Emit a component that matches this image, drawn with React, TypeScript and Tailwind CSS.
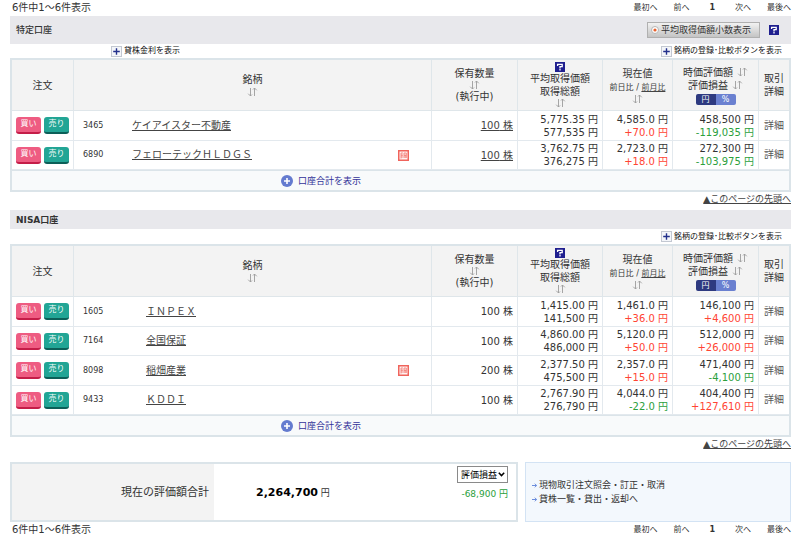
import type { ReactNode } from "react";

type Money = { text: string; tone?: "up" | "down" };

type Holding = {
  code: string;
  name: string;
  qty: string;
  alert?: boolean;
  avg: string;
  cost: string;
  price: string;
  change: Money;
  value: string;
  profit: Money;
};

const tokutei: Holding[] = [
  {
    code: "3465",
    name: "ケイアイスター不動産",
    qty: "100",
    avg: "5,775.35",
    cost: "577,535",
    price: "4,585.0",
    change: { text: "+70.0", tone: "up" },
    value: "458,500",
    profit: { text: "-119,035", tone: "down" },
  },
  {
    code: "6890",
    name: "フェローテックＨＬＤＧＳ",
    qty: "100",
    alert: true,
    avg: "3,762.75",
    cost: "376,275",
    price: "2,723.0",
    change: { text: "+18.0", tone: "up" },
    value: "272,300",
    profit: { text: "-103,975", tone: "down" },
  },
];

const nisa: Holding[] = [
  {
    code: "1605",
    name: "ＩＮＰＥＸ",
    qty: "100",
    avg: "1,415.00",
    cost: "141,500",
    price: "1,461.0",
    change: { text: "+36.0", tone: "up" },
    value: "146,100",
    profit: { text: "+4,600", tone: "up" },
  },
  {
    code: "7164",
    name: "全国保証",
    qty: "100",
    avg: "4,860.00",
    cost: "486,000",
    price: "5,120.0",
    change: { text: "+50.0", tone: "up" },
    value: "512,000",
    profit: { text: "+26,000", tone: "up" },
  },
  {
    code: "8098",
    name: "稲畑産業",
    qty: "200",
    alert: true,
    avg: "2,377.50",
    cost: "475,500",
    price: "2,357.0",
    change: { text: "+15.0", tone: "up" },
    value: "471,400",
    profit: { text: "-4,100", tone: "down" },
  },
  {
    code: "9433",
    name: "ＫＤＤＩ",
    qty: "100",
    avg: "2,767.90",
    cost: "276,790",
    price: "4,044.0",
    change: { text: "-22.0", tone: "down" },
    value: "404,400",
    profit: { text: "+127,610", tone: "up" },
  },
];

const toneClass = {
  up: "text-[#ff4433]",
  down: "text-[#2ba03c]",
};

function SortArrows() {
  return (
    <button type="button" aria-label="並べ替え" className="inline-flex">
      <svg width="11" height="10" viewBox="0 0 11 10" fill="none" stroke="#9c9c9c" strokeWidth="0.9">
        <path d="M3.5 1V9M1.2 6.7L3.5 9L5 7.5" />
        <path d="M7.5 9V1M6 2.5L7.5 1L9.8 3.3" />
      </svg>
    </button>
  );
}

function HelpIcon() {
  return (
    <button type="button" aria-label="ヘルプ" className="block">
      <svg width="10" height="10" viewBox="0 0 10 10">
        <rect width="10" height="10" fill="#1f1f8f" />
        <path
          d="M2.6 3.9V2.3H7.2V4.6H5V6.4M5 7.1V8.6"
          fill="none"
          stroke="#fff"
          strokeWidth="1.3"
        />
      </svg>
    </button>
  );
}

function PlusLink({ children }: { children: ReactNode }) {
  return (
    <a href="#" className="flex items-center gap-[2px] text-[8px] text-[#111]">
      <svg width="11" height="11" viewBox="0 0 11 11">
        <rect x="0.5" y="0.5" width="10" height="10" fill="#f4f6fa" stroke="#c3c8d2" />
        <path d="M5.5 2.2V8.8M2.2 5.5H8.8" stroke="#22308c" strokeWidth="1.4" />
      </svg>
      {children}
    </a>
  );
}

function AlertIcon() {
  return (
    <svg width="11" height="11" viewBox="0 0 11 11" fill="none" stroke="#f0645c">
      <rect x="0.75" y="0.75" width="9.5" height="9.5" fill="#fff3f2" strokeWidth="1.5" />
      <path
        d="M3 8.5V3H5M3 5H5M4 5V8M6 8V3H8.3V8M6 5.2H8.3M7.2 5.2V8"
        strokeWidth="0.7"
      />
    </svg>
  );
}

function Pager() {
  return (
    <div className="flex h-4 items-center justify-between pl-[2px]">
      <p>6件中1～6件表示</p>
      <nav className="flex gap-4 text-[8px]">
        <a href="#">最初へ</a>
        <a href="#">前へ</a>
        <b className="px-1">1</b>
        <a href="#">次へ</a>
        <a href="#">最後へ</a>
      </nav>
    </div>
  );
}

function TopLink() {
  return (
    <div className="flex h-[18px] justify-end text-[9px] leading-[14px]">
      <a href="#" className="text-[#444] underline">
        ▲このページの先頭へ
      </a>
    </div>
  );
}

function Amount({ text, tone }: Money) {
  return <div className={tone ? toneClass[tone] : undefined}>{text} 円</div>;
}

const th = "border-r border-b border-[#dfe6ea] p-0 font-normal last:border-r-0";
const td = "border-r border-b border-[#e3e9ee] p-0 last:border-r-0";
const num = `${td} pr-1 text-right leading-[13px]`;

function HoldingsTable({ rows, nested }: { rows: Holding[]; nested?: boolean }) {
  return (
    <div className="border-2 border-[#dbe4e9]">
      <table className="w-full table-fixed border-separate border-spacing-0">
        <colgroup>
          <col className="w-[62px]" />
          <col />
          <col className="w-[86px]" />
          <col className="w-[85px]" />
          <col className="w-[70px]" />
          <col className="w-[86px]" />
          <col className="w-[30px]" />
        </colgroup>
        <thead className="bg-[#f3f3f3]">
          <tr className="h-[51px] leading-[13px]">
            <th className={th}>注文</th>
            <th className={th}>
              銘柄
              <div className="flex justify-center pt-px">
                <SortArrows />
              </div>
            </th>
            <th className={th}>
              保有数量
              <div className="flex justify-center">
                <SortArrows />
              </div>
              (執行中)
            </th>
            <th className={th}>
              <div className="flex flex-col items-center">
                <HelpIcon />
                <span>平均取得価額</span>
                <span>取得総額</span>
                <SortArrows />
              </div>
            </th>
            <th className={th}>
              現在値
              <div className="pt-px text-[8px]">
                前日比 /{" "}
                <a href="#" className="text-[#444] underline">
                  前月比
                </a>
              </div>
              <div className="flex justify-center">
                <SortArrows />
              </div>
            </th>
            <th className={th}>
              <div className="flex flex-col items-center">
                <span className="flex items-center gap-1">
                  時価評価額 <SortArrows />
                </span>
                <span className="flex items-center gap-1">
                  評価損益 <SortArrows />
                </span>
                <span className="mt-[2px] flex h-[11px] w-10 overflow-hidden rounded-[2px] text-[8px] leading-[11px] text-white">
                  <button type="button" className="w-5 bg-[#2e3a80]">
                    円
                  </button>
                  <button type="button" className="w-5 bg-[#6a80d0]">
                    %
                  </button>
                </span>
              </div>
            </th>
            <th className={th}>
              取引
              <br />
              詳細
            </th>
          </tr>
        </thead>
        <tbody>
          {rows.map((r) => (
            <tr key={r.code} className="odd:h-[30px] even:h-[29px]">
              <td className={td}>
                <div className="flex gap-[3px] pl-1 text-[8px] leading-[13px] text-white">
                  <button
                    type="button"
                    className="h-[17px] w-[25px] rounded-[3px] border-b-2 border-[#c41d48] bg-[#ee5c82] pb-[2px]"
                  >
                    買い
                  </button>
                  <button
                    type="button"
                    className="h-[17px] w-[25px] rounded-[3px] border-b-2 border-[#0c5f58] bg-[#22a595] pb-[2px]"
                  >
                    売り
                  </button>
                </div>
              </td>
              <td className={td}>
                <div className="flex items-center pr-[22px] pl-[9px]">
                  <span className={nested ? "w-[63px] text-[8px]" : "w-[49px] text-[8px]"}>
                    {r.code}
                  </span>
                  <a href="#" className="text-[#444] underline">
                    {r.name}
                  </a>
                  <span className="ml-auto">{r.alert && <AlertIcon />}</span>
                </div>
              </td>
              <td className={num}>
                {nested ? (
                  <span>{r.qty} 株</span>
                ) : (
                  <a href="#" className="text-[#444] underline">
                    {r.qty} 株
                  </a>
                )}
              </td>
              <td className={num}>
                <Amount text={r.avg} />
                <Amount text={r.cost} />
              </td>
              <td className={num}>
                <Amount text={r.price} />
                <Amount {...r.change} />
              </td>
              <td className={num}>
                <Amount text={r.value} />
                <Amount {...r.profit} />
              </td>
              <td className={`${td} text-center`}>
                <a href="#" className="text-[#555]">
                  詳細
                </a>
              </td>
            </tr>
          ))}
        </tbody>
      </table>
      <div className="flex h-5 items-center border-t border-[#dbe4e9] bg-[#f8fafb] pl-[269px]">
        <button type="button" className="flex items-center gap-[5px] text-[9px] text-[#333399]">
          <svg width="12" height="12" viewBox="0 0 12 12">
            <circle cx="6" cy="6" r="6" fill="#647bcf" />
            <path d="M6 3V9M3 6H9" stroke="#fff" strokeWidth="1.6" />
          </svg>
          口座合計を表示
        </button>
      </div>
    </div>
  );
}

function ArrowLink({ children }: { children: ReactNode }) {
  return (
    <li>
      <a href="#" className="flex items-center gap-[2px]">
        <svg width="5" height="5" viewBox="0 0 5 5" fill="none" stroke="#5b80d8" strokeWidth="0.9">
          <path d="M0 2.5H4.5M2.8 0.7L4.6 2.5L2.8 4.3" />
        </svg>
        {children}
      </a>
    </li>
  );
}

export default function App() {
  return (
    <div
      lang="ja"
      className="bg-white pr-[9px] pl-[10px] font-['DejaVu_Sans','Noto_Sans_CJK_JP',sans-serif] text-[10px] leading-[14px] text-[#333]"
    >
      <Pager />

      <section>
        <div className="flex h-[28px] items-center bg-[#e8e8ec] pr-3 pl-[6px]">
          <h2 className="text-[9px] font-medium">特定口座</h2>
          <button
            type="button"
            className="mr-[9px] ml-auto flex h-4 w-[113px] items-center gap-[2px] border border-[#b0b0b0] bg-linear-to-b from-[#f2f2f2] to-[#c4c4c4] pl-[3px] text-[9px]"
          >
            <svg width="8" height="8" viewBox="0 0 8 8">
              <circle cx="4" cy="4" r="3.5" fill="#fff" stroke="#b5b5b5" />
              <circle cx="4" cy="4" r="1.6" fill="#e8602c" />
            </svg>
            平均取得価額小数表示
          </button>
          <HelpIcon />
        </div>
        <div className="flex h-[14px] items-center justify-between pr-[9px] pl-[101px]">
          <PlusLink>貸株金利を表示</PlusLink>
          <PlusLink>銘柄の登録･比較ボタンを表示</PlusLink>
        </div>
        <HoldingsTable rows={tokutei} />
        <TopLink />
      </section>

      <section>
        <div className="flex h-[19px] items-center bg-[#e8e8ec] pl-[6px]">
          <h2 className="text-[9px] font-bold">NISA口座</h2>
        </div>
        <div className="flex h-[15px] items-center justify-end pr-[9px]">
          <PlusLink>銘柄の登録･比較ボタンを表示</PlusLink>
        </div>
        <HoldingsTable rows={nisa} nested />
        <TopLink />
      </section>

      <div className="mt-[7px] flex h-[60px] gap-[7px]">
        <div className="flex flex-1 border-2 border-[#dbe4e9]">
          <div className="flex w-[202px] items-center justify-end bg-[#f3f3f3] pt-[2px] pr-[5px] text-[11px]">
            現在の評価額合計
          </div>
          <div className="flex flex-1 justify-between pt-[2px] pr-2 pl-[42px] text-[9px]">
            <p className="self-center">
              <b className="text-[11px] text-black">2,264,700</b> 円
            </p>
            <div className="flex flex-col items-end gap-1">
              <div className="relative flex">
                <select
                  aria-label="表示項目"
                  className="h-[17px] w-[51px] appearance-none border border-[#8a8a8a] bg-white pl-[3px] text-[9px] text-black"
                >
                  <option>評価損益</option>
                </select>
                <svg
                  width="7"
                  height="5"
                  viewBox="0 0 7 5"
                  fill="none"
                  stroke="#000"
                  strokeWidth="1.5"
                  className="pointer-events-none absolute top-[6px] right-[3px]"
                >
                  <path d="M0.8 0.8L3.5 3.6L6.2 0.8" />
                </svg>
              </div>
              <span className="text-[#2ba03c]">-68,900 円</span>
            </div>
          </div>
        </div>
        <ul className="flex w-[266px] flex-col justify-center border border-[#d3e3f4] bg-[#f3f8fd] pl-[6px] text-[9px]">
          <ArrowLink>現物取引注文照会・訂正・取消</ArrowLink>
          <ArrowLink>貸株一覧・貸出・返却へ</ArrowLink>
        </ul>
      </div>

      <Pager />
    </div>
  );
}
